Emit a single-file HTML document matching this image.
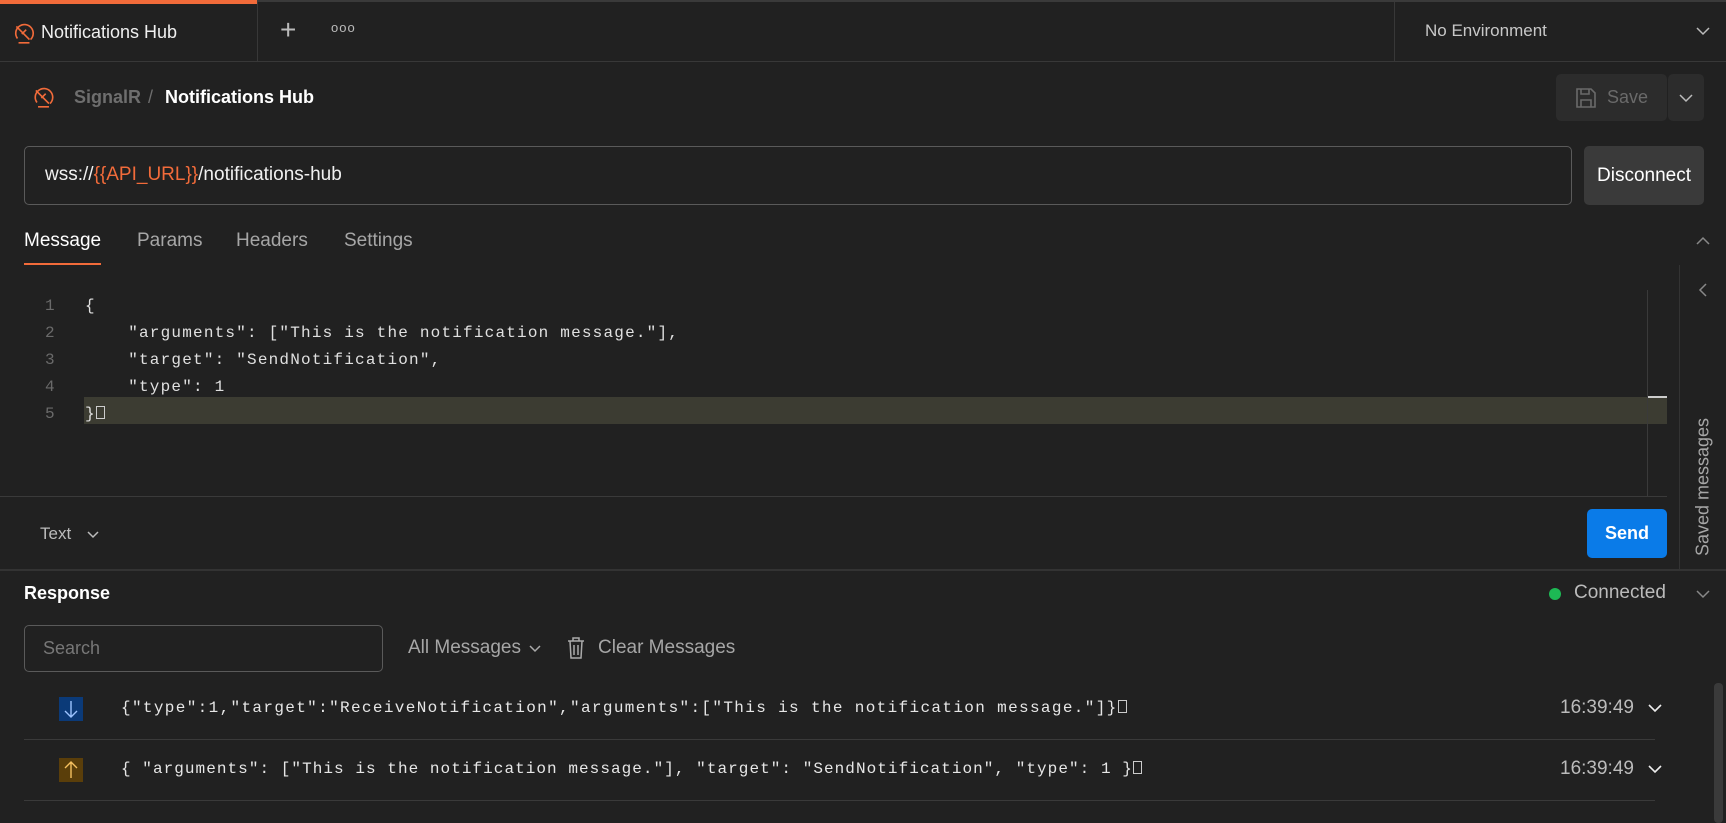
<!DOCTYPE html>
<html><head><meta charset="utf-8"><style>
*{margin:0;padding:0;box-sizing:border-box}
body{width:1726px;height:816px;background:#212121;font-family:"Liberation Sans",sans-serif;color:#e6e6e6;position:relative;overflow:hidden}
.a{position:absolute;white-space:nowrap}
.mono{font-family:"Liberation Mono",monospace;font-size:16px;letter-spacing:1.2px}
.g{color:#a6a6a6}
</style></head><body>
<!-- top bar -->
<div class="a" style="left:0;top:0;width:1726px;height:2px;background:#3a3a3a"></div>
<div class="a" style="left:0;top:0;width:257px;height:4px;background:#f26b3a"></div>
<div class="a" style="left:0;top:61px;width:1726px;height:1px;background:#383838"></div>
<div class="a" style="left:257px;top:2px;width:1px;height:59px;background:#383838"></div>
<div class="a" style="left:1394px;top:2px;width:1px;height:59px;background:#383838"></div>
<svg class="a" style="left:12px;top:21px" width="24" height="24" viewBox="0 0 20 22" fill="none" stroke="#f26b3a" stroke-width="1.5"><path d="M4 16 A8 8 0 1 1 16 17"/><path d="M3 5 L15 17 M8 12 L12 8 M5 20 H15"/></svg>
<div class="a" style="left:41px;top:22px;font-size:18px;color:#f0f0f0">Notifications Hub</div>
<div class="a" style="left:280px;top:14px;font-size:28px;color:#bbb;font-weight:300">+</div>
<div class="a" style="left:331px;top:20px;font-size:13px;color:#bbb;letter-spacing:1px">ooo</div>
<div class="a g" style="left:1425px;top:21px;font-size:17px;color:#c8c8c8">No Environment</div>
<svg class="a" style="left:1695px;top:26px" width="16" height="10" fill="none" stroke="#bbb" stroke-width="1.5"><path d="M2 2l6 6 6-6"/></svg>
<!-- breadcrumb -->
<svg class="a" style="left:32px;top:85px" width="23" height="24" viewBox="0 0 20 22" fill="none" stroke="#f26b3a" stroke-width="1.5"><path d="M4 16 A8 8 0 1 1 16 17"/><path d="M3 5 L15 17 M8 12 L12 8 M5 20 H15"/></svg>
<div class="a" style="left:74px;top:87px;font-size:18px;font-weight:bold;color:#6e6e6e">SignalR</div>
<div class="a" style="left:148px;top:87px;font-size:18px;color:#6e6e6e">/</div>
<div class="a" style="left:165px;top:87px;font-size:18px;font-weight:bold;color:#fff">Notifications Hub</div>
<div class="a" style="left:1556px;top:74px;width:111px;height:47px;background:#2c2c2c;border-radius:5px"></div>
<svg class="a" style="left:1575px;top:87px" width="22" height="22" fill="none" stroke="#6a6a6a" stroke-width="1.6"><path d="M2 2h14l4 4v14H2z M6 2v5h8V2 M6 20v-7h10v7"/></svg>
<div class="a" style="left:1607px;top:87px;font-size:18px;color:#6a6a6a">Save</div>
<div class="a" style="left:1668px;top:74px;width:36px;height:47px;background:#2c2c2c;border-radius:5px"></div>
<svg class="a" style="left:1678px;top:93px" width="16" height="10" fill="none" stroke="#bbb" stroke-width="1.5"><path d="M2 2l6 6 6-6"/></svg>
<!-- url -->
<div class="a" style="left:24px;top:146px;width:1548px;height:59px;border:1px solid #5a5a5a;border-radius:5px"></div>
<div class="a" style="left:45px;top:164px;font-size:19px;color:#f0f0f0">wss://<span style="color:#f26b3a">{{API_URL}}</span>/notifications-hub</div>
<div class="a" style="left:1584px;top:146px;width:120px;height:59px;background:#3a3a3a;border-radius:5px;text-align:center;line-height:59px;font-size:19px;color:#fff">Disconnect</div>
<!-- tabs -->
<div class="a" style="left:24px;top:230px;font-size:19px;color:#fff">Message</div>
<div class="a g" style="left:137px;top:230px;font-size:19px">Params</div>
<div class="a g" style="left:236px;top:230px;font-size:19px">Headers</div>
<div class="a g" style="left:344px;top:230px;font-size:19px">Settings</div>
<div class="a" style="left:24px;top:263px;width:77px;height:2px;background:#f26b3a"></div>
<svg class="a" style="left:1695px;top:236px" width="16" height="10" fill="none" stroke="#888" stroke-width="1.5"><path d="M2 8l6-6 6 6"/></svg>
<!-- editor -->
<div class="a" style="left:84px;top:397px;width:1583px;height:27px;background:#3c3c32"></div>
<div class="a" style="left:1647px;top:290px;width:1px;height:207px;background:#3a3a3a"></div>
<div class="a" style="left:1648px;top:396px;width:19px;height:2px;background:#ccc"></div>
<div class="a" style="left:0;top:496px;width:1667px;height:1px;background:#3a3a3a"></div>
<div class="a mono" style="left:45px;top:293px;line-height:27px;color:#6a6a6a;letter-spacing:0">1<br>2<br>3<br>4<br>5</div>
<div class="a mono" style="left:85px;top:293px;line-height:27px;color:#e0e0e0">{<br>&nbsp;&nbsp;&nbsp;&nbsp;"arguments": ["This is the notification message."],<br>&nbsp;&nbsp;&nbsp;&nbsp;"target": "SendNotification",<br>&nbsp;&nbsp;&nbsp;&nbsp;"type": 1<br>}<span style="display:inline-block;width:9px;height:13px;border:1px solid #ccc;vertical-align:-1px"></span></div>
<div class="a" style="left:1679px;top:265px;width:1px;height:305px;background:#333"></div>
<svg class="a" style="left:1698px;top:282px" width="10" height="16" fill="none" stroke="#888" stroke-width="1.5"><path d="M8 2l-6 6 6 6"/></svg>
<div class="a g" style="left:1703px;top:487px;transform:translate(-50%,-50%) rotate(-90deg);font-size:18px;color:#a6a6a6">Saved messages</div>
<div class="a g" style="left:40px;top:524px;font-size:17px;color:#bbb">Text</div>
<svg class="a" style="left:86px;top:530px" width="14" height="9" fill="none" stroke="#bbb" stroke-width="1.5"><path d="M2 2l5 5 5-5"/></svg>
<div class="a" style="left:1587px;top:509px;width:80px;height:49px;background:#0a7be8;border-radius:5px;text-align:center;line-height:49px;font-size:18px;font-weight:bold;color:#fff">Send</div>
<!-- response -->
<div class="a" style="left:0;top:569px;width:1726px;height:2px;background:#333"></div>
<div class="a" style="left:24px;top:583px;font-size:18px;font-weight:bold;color:#fff">Response</div>
<div class="a" style="left:1549px;top:588px;width:12px;height:12px;border-radius:50%;background:#1db954"></div>
<div class="a" style="left:1574px;top:582px;font-size:19px;color:#bbb">Connected</div>
<svg class="a" style="left:1695px;top:589px" width="16" height="10" fill="none" stroke="#888" stroke-width="1.5"><path d="M2 2l6 6 6-6"/></svg>
<div class="a" style="left:24px;top:625px;width:359px;height:47px;border:1px solid #5a5a5a;border-radius:5px"></div>
<div class="a" style="left:43px;top:638px;font-size:18px;color:#777">Search</div>
<div class="a g" style="left:408px;top:637px;font-size:19px">All Messages</div>
<svg class="a" style="left:528px;top:644px" width="14" height="9" fill="none" stroke="#aaa" stroke-width="1.5"><path d="M2 2l5 5 5-5"/></svg>
<svg class="a" style="left:566px;top:636px" width="20" height="24" fill="none" stroke="#aaa" stroke-width="1.5"><path d="M2 5h16 M7 5V2h6v3 M4 5l1 17h10l1-17 M8 9v10 M12 9v10"/></svg>
<div class="a g" style="left:598px;top:637px;font-size:19px">Clear Messages</div>
<div class="a" style="left:59px;top:697px;width:24px;height:24px;background:#0b3a78"></div>
<svg class="a" style="left:63px;top:700px" width="16" height="18" fill="none" stroke="#9cc3ff" stroke-width="1.4"><path d="M8 1v16 M2 11l6 6 6-6"/></svg>
<div class="a mono" style="left:121px;top:699px;color:#e6e6e6;letter-spacing:1.35px">{"type":1,"target":"ReceiveNotification","arguments":["This is the notification message."]}<span style="display:inline-block;width:9px;height:13px;border:1px solid #ccc;vertical-align:-1px"></span></div>
<div class="a" style="left:1560px;top:697px;font-size:19px;color:#bbb">16:39:49</div>
<svg class="a" style="left:1647px;top:703px" width="16" height="10" fill="none" stroke="#eee" stroke-width="1.6"><path d="M2 2l6 6 6-6"/></svg>
<div class="a" style="left:24px;top:739px;width:1631px;height:1px;background:#3a3a3a"></div>
<div class="a" style="left:59px;top:758px;width:24px;height:24px;background:#5a3e0a"></div>
<svg class="a" style="left:63px;top:761px" width="16" height="18" fill="none" stroke="#f5c060" stroke-width="1.4"><path d="M8 17V1 M2 7l6-6 6 6"/></svg>
<div class="a mono" style="left:121px;top:760px;color:#e6e6e6;letter-spacing:1.05px">{ "arguments": ["This is the notification message."], "target": "SendNotification", "type": 1 }<span style="display:inline-block;width:9px;height:13px;border:1px solid #ccc;vertical-align:-1px"></span></div>
<div class="a" style="left:1560px;top:758px;font-size:19px;color:#bbb">16:39:49</div>
<svg class="a" style="left:1647px;top:764px" width="16" height="10" fill="none" stroke="#eee" stroke-width="1.6"><path d="M2 2l6 6 6-6"/></svg>
<div class="a" style="left:24px;top:800px;width:1631px;height:1px;background:#3a3a3a"></div>
<div class="a" style="left:1714px;top:683px;width:9px;height:140px;background:#3a3a3a;border-radius:4px"></div>
</body></html>
